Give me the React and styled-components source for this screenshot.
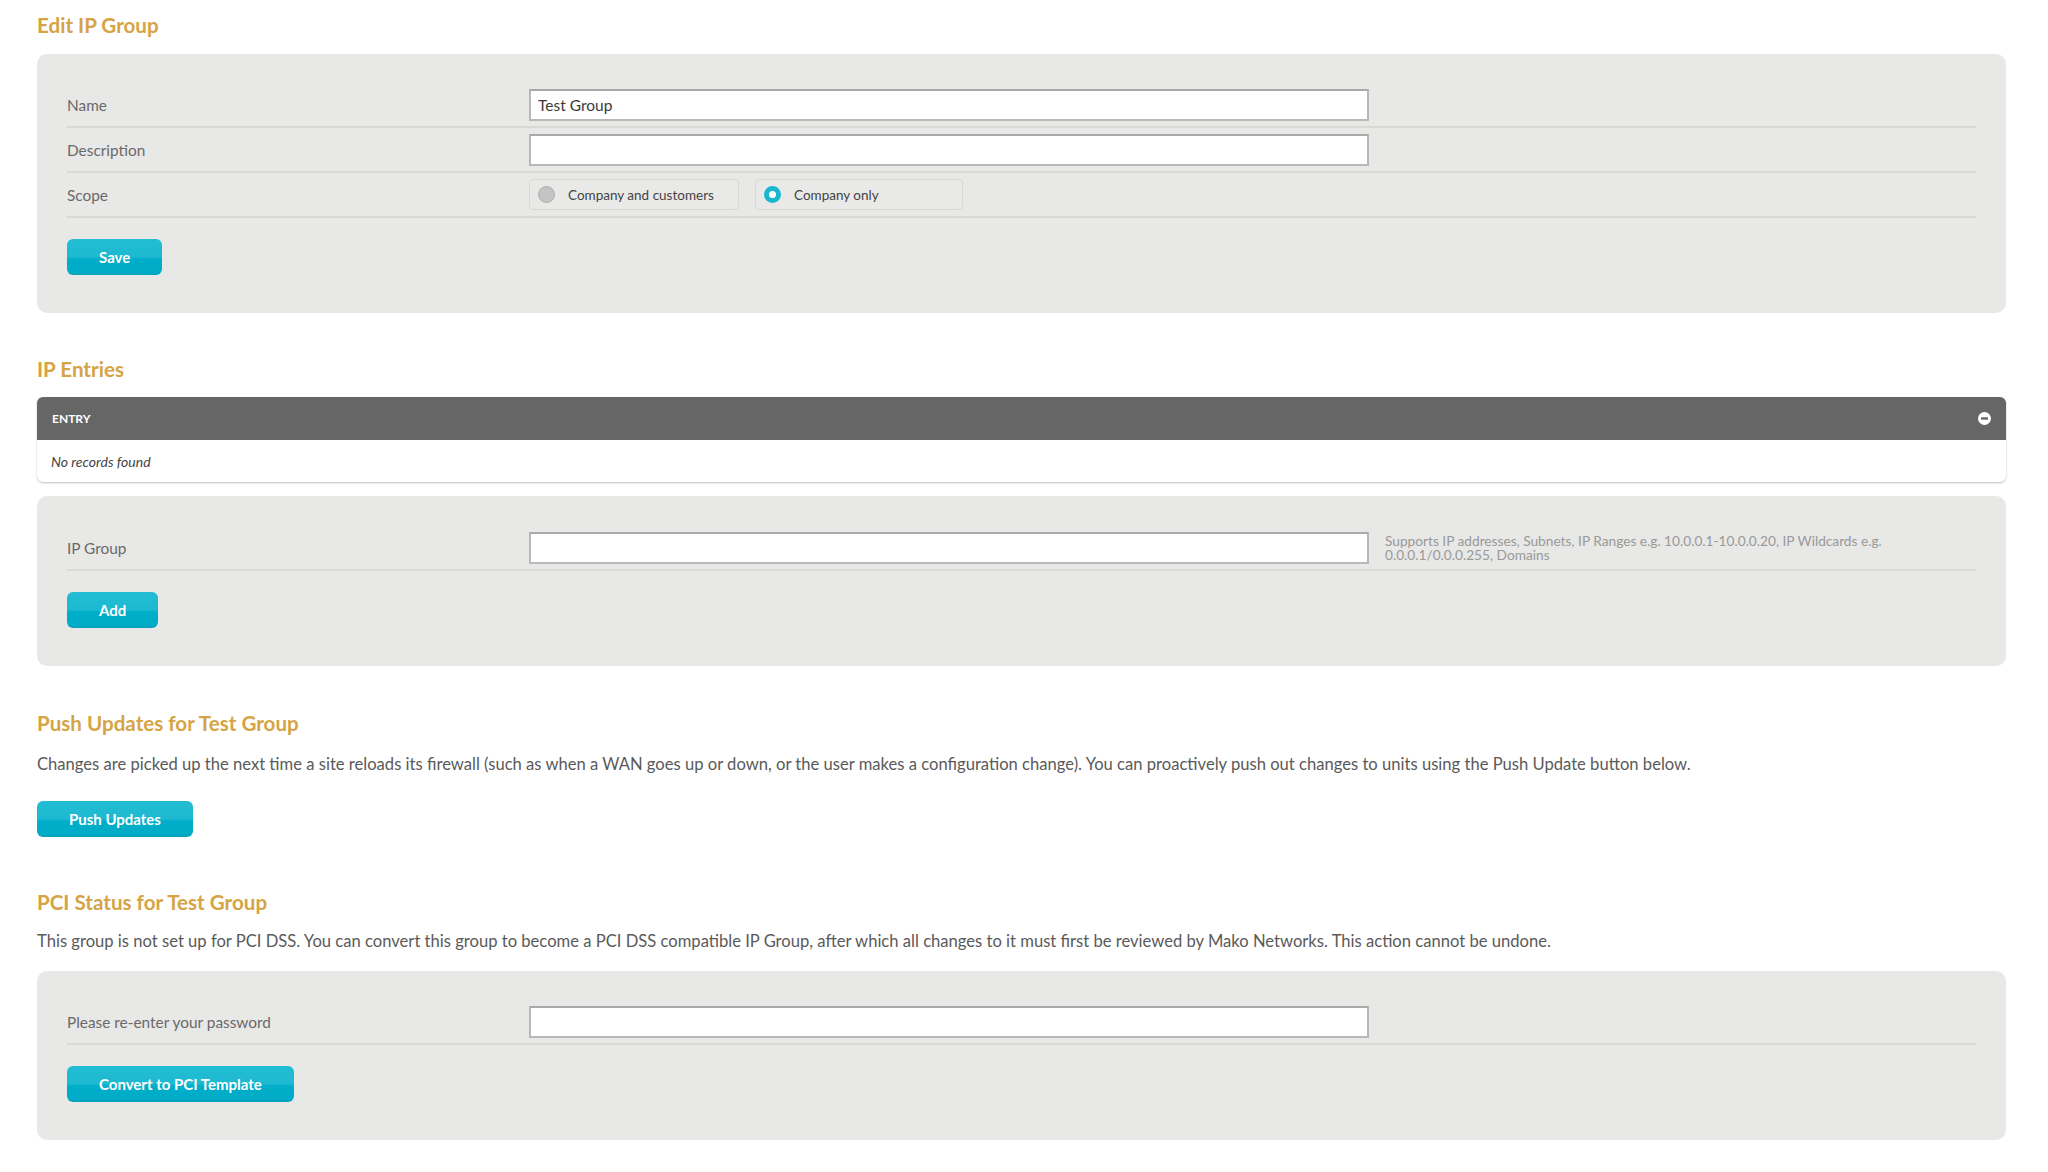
import React from "react";
import { createGlobalStyle, styled } from "styled-components";

const GlobalStyle = createGlobalStyle`
   html, body {
      margin: 0;
      padding: 0;
      background: #ffffff;
   }
   body {
      font-family: Lato, "Open Sans", "Liberation Sans", sans-serif;
      color: #555;
   }
`;

const Page = styled.div`
   padding: 12px 42px 40px 37px;
`;

const SectionTitle = styled.h2`
   margin: ${(p) => p.$top || 0}px 0 ${(p) => p.$bottom || 16}px;
   font-size: 20.6px;
   line-height: 26px;
   font-weight: 700;
   color: #d6a444;
`;

const Panel = styled.div`
   background: #e8e8e7;
   border-radius: 10px;
   padding: ${(p) => p.$top || 29}px 30px 38px;
`;

const FormRow = styled.div`
   display: grid;
   grid-template-columns: 462px 840px 1fr;
   align-items: center;
   min-height: 43px;
   border-bottom: 2px solid #d8d8d7;
`;

const Label = styled.div`
   font-size: 15.4px;
   color: #6a6a6a;
`;

const TextInput = styled.input`
   box-sizing: border-box;
   height: 32px;
   width: 100%;
   margin: 0;
   padding: 0 7px;
   background: #fff;
   border: 2px solid #b8b8b8;
   border-top-color: #a9a9a9;
   font-family: inherit;
   font-size: 15.5px;
   color: #3a3a3a;
   outline: none;
`;

const Help = styled.div`
   padding-left: 16px;
   padding-right: 60px;
   font-size: 13.7px;
   line-height: 14px;
   color: #999;
`;

const RadioGroup = styled.div`
   display: flex;
   gap: 16px;
`;

const RadioBox = styled.label`
   box-sizing: border-box;
   display: flex;
   align-items: center;
   gap: 13px;
   width: ${(p) => p.$width}px;
   height: 31px;
   padding: 0 8px;
   border: 1px solid #d8d8d8;
   border-radius: 4px;
   background: #e9e9e8;
   font-size: 13.5px;
   color: #444;
`;

const Dot = styled.span`
   box-sizing: border-box;
   width: 17px;
   height: 17px;
   border-radius: 50%;
   background: ${(p) => (p.$on ? "#ffffff" : "#c4c4c4")};
   border: ${(p) => (p.$on ? "5px solid #19b6cf" : "1px solid #adadad")};
`;

const Button = styled.button`
   height: 36px;
   margin-top: ${(p) => p.$top || 0}px;
   padding: 0 32px;
   border: none;
   border-radius: 6px;
   background: linear-gradient(#22bdd3 0%, #1db9d0 50%, #00aec9 55%, #00acc7 92%, #0a9fb8 100%);
   font-family: inherit;
   font-size: 15px;
   font-weight: 700;
   color: #fff;
   cursor: pointer;
`;

const Paragraph = styled.p`
   margin: 0 0 ${(p) => p.$bottom || 0}px;
   font-size: 16.6px;
   line-height: 20px;
   color: #5a5a5a;
`;

const TableCard = styled.div`
   margin-bottom: 14px;
   border-radius: 6px;
   overflow: hidden;
   background: #fff;
   box-shadow: 0 1px 2px rgba(0, 0, 0, 0.25);
`;

const TableHead = styled.div`
   display: flex;
   align-items: center;
   justify-content: space-between;
   height: 43px;
   padding: 0 15px 0 15px;
   background: #666667;
   font-size: 12px;
   font-weight: 700;
   color: #fff;
   text-transform: uppercase;
`;

const TableRow = styled.div`
   display: flex;
   align-items: center;
   height: 42px;
   padding: 0 14px;
   font-size: 14px;
   font-style: italic;
   color: #444;
`;

const MinusIcon = () => (
   <svg width="13" height="13" viewBox="0 0 13 13">
      <circle cx="6.5" cy="6.5" r="6.5" fill="#fff" />
      <rect x="3" y="5.3" width="7" height="2.4" fill="#666667" />
   </svg>
);

const App = () => {
   return (
      <Page>
         <GlobalStyle />
         <SectionTitle>Edit IP Group</SectionTitle>
         <Panel>
            <FormRow>
               <Label>Name</Label>
               <TextInput defaultValue='Test Group' />
            </FormRow>
            <FormRow>
               <Label>Description</Label>
               <TextInput />
            </FormRow>
            <FormRow>
               <Label>Scope</Label>
               <RadioGroup>
                  <RadioBox $width={210}>
                     <Dot />
                     Company and customers
                  </RadioBox>
                  <RadioBox $width={208}>
                     <Dot $on />
                     Company only
                  </RadioBox>
               </RadioGroup>
            </FormRow>
            <Button $top={21}>Save</Button>
         </Panel>

         <SectionTitle $top={43} $bottom={15}>IP Entries</SectionTitle>
         <TableCard>
            <TableHead>
               <span>Entry</span>
               <MinusIcon />
            </TableHead>
            <TableRow>No records found</TableRow>
         </TableCard>
         <Panel $top={30}>
            <FormRow>
               <Label>IP Group</Label>
               <TextInput />
               <Help>
                  Supports IP addresses, Subnets, IP Ranges e.g. 10.0.0.1-10.0.0.20, IP Wildcards e.g.
                  0.0.0.1/0.0.0.255, Domains
               </Help>
            </FormRow>
            <Button $top={21}>Add</Button>
         </Panel>

         <SectionTitle $top={44} $bottom={18}>Push Updates for Test Group</SectionTitle>
         <Paragraph $bottom={27}>
            Changes are picked up the next time a site reloads its firewall (such as when a WAN goes up or down, or the
            user makes a configuration change). You can proactively push out changes to units using the Push Update
            button below.
         </Paragraph>
         <Button>Push Updates</Button>

         <SectionTitle $top={52} $bottom={16}>PCI Status for Test Group</SectionTitle>
         <Paragraph $bottom={20}>
            This group is not set up for PCI DSS. You can convert this group to become a PCI DSS compatible IP Group,
            after which all changes to it must first be reviewed by Mako Networks. This action cannot be undone.
         </Paragraph>
         <Panel $top={29}>
            <FormRow>
               <Label>Please re-enter your password</Label>
               <TextInput type='password' />
            </FormRow>
            <Button $top={21}>Convert to PCI Template</Button>
         </Panel>
      </Page>
   );
};

export default App;
